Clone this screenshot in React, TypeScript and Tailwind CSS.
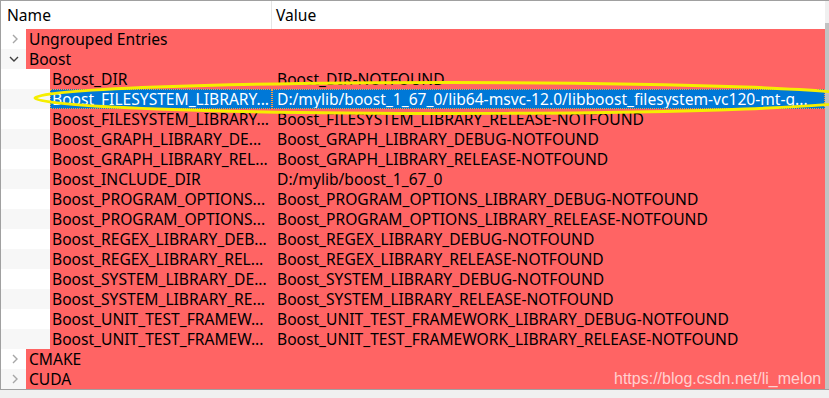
import React from 'react';

type Row = {
  name: string;
  value?: string;
  level: 0 | 1;
  expanded?: boolean;
  selected?: boolean;
};

const rows: Row[] = [
  { name: 'Ungrouped Entries', level: 0, expanded: false },
  { name: 'Boost', level: 0, expanded: true },
  { name: 'Boost_DIR', value: 'Boost_DIR-NOTFOUND', level: 1 },
  {
    name: 'Boost_FILESYSTEM_LIBRARY...',
    value: 'D:/mylib/boost_1_67_0/lib64-msvc-12.0/libboost_filesystem-vc120-mt-g...',
    level: 1,
    selected: true,
  },
  { name: 'Boost_FILESYSTEM_LIBRARY...', value: 'Boost_FILESYSTEM_LIBRARY_RELEASE-NOTFOUND', level: 1 },
  { name: 'Boost_GRAPH_LIBRARY_DE...', value: 'Boost_GRAPH_LIBRARY_DEBUG-NOTFOUND', level: 1 },
  { name: 'Boost_GRAPH_LIBRARY_REL...', value: 'Boost_GRAPH_LIBRARY_RELEASE-NOTFOUND', level: 1 },
  { name: 'Boost_INCLUDE_DIR', value: 'D:/mylib/boost_1_67_0', level: 1 },
  { name: 'Boost_PROGRAM_OPTIONS...', value: 'Boost_PROGRAM_OPTIONS_LIBRARY_DEBUG-NOTFOUND', level: 1 },
  { name: 'Boost_PROGRAM_OPTIONS...', value: 'Boost_PROGRAM_OPTIONS_LIBRARY_RELEASE-NOTFOUND', level: 1 },
  { name: 'Boost_REGEX_LIBRARY_DEB...', value: 'Boost_REGEX_LIBRARY_DEBUG-NOTFOUND', level: 1 },
  { name: 'Boost_REGEX_LIBRARY_REL...', value: 'Boost_REGEX_LIBRARY_RELEASE-NOTFOUND', level: 1 },
  { name: 'Boost_SYSTEM_LIBRARY_DE...', value: 'Boost_SYSTEM_LIBRARY_DEBUG-NOTFOUND', level: 1 },
  { name: 'Boost_SYSTEM_LIBRARY_RE...', value: 'Boost_SYSTEM_LIBRARY_RELEASE-NOTFOUND', level: 1 },
  { name: 'Boost_UNIT_TEST_FRAMEW...', value: 'Boost_UNIT_TEST_FRAMEWORK_LIBRARY_DEBUG-NOTFOUND', level: 1 },
  { name: 'Boost_UNIT_TEST_FRAMEW...', value: 'Boost_UNIT_TEST_FRAMEWORK_LIBRARY_RELEASE-NOTFOUND', level: 1 },
  { name: 'CMAKE', level: 0, expanded: false },
  { name: 'CUDA', level: 0, expanded: false },
];

function Chevron({ open }: { open?: boolean }) {
  // tree branch arrow
  return open ? (
    <svg width="10" height="10" viewBox="0 0 10 10" className="ml-[8px]">
      <polyline points="1,3 5,7 9,3" fill="none" stroke="#404040" strokeWidth="1.4" />
    </svg>
  ) : (
    <svg width="10" height="10" viewBox="0 0 10 10" className="ml-[9px]">
      <polyline points="3,1 7,5 3,9" fill="none" stroke="#a6a6a6" strokeWidth="1.4" />
    </svg>
  );
}

function TreeRow({ row, index }: { row: Row; index: number }) {
  const stripe = index % 2 === 1 ? 'bg-[#f7f7f7]' : 'bg-white';

  if (row.level === 0) {
    return (
      <div className="flex h-[20px]">
        <div className={`flex w-[25px] items-center ${stripe}`}>
          <Chevron open={row.expanded} />
        </div>
        <div className="flex-1 bg-[#ff6464] pl-[3px]">{row.name}</div>
      </div>
    );
  }

  if (row.selected) {
    return (
      <div className="flex h-[20px]">
        <div className={`w-[49px] ${stripe}`} />
        <div className="flex flex-1 bg-[#0078d7] text-white">
          <div className="w-[222px] overflow-hidden whitespace-nowrap border border-dotted border-[#ff9a3c] pl-[1px] leading-[18px]">
            {row.name}
          </div>
          <div className="flex-1 overflow-hidden whitespace-nowrap border border-dotted border-[#ff9a3c] pl-[4px] leading-[18px]">
            {row.value}
          </div>
        </div>
      </div>
    );
  }

  return (
    <div className="flex h-[20px]">
      <div className={`w-[49px] ${stripe}`} />
      <div className="flex flex-1 bg-[#ff6464]">
        <div className="w-[222px] overflow-hidden whitespace-nowrap pl-[2px]">{row.name}</div>
        <div className="flex-1 overflow-hidden whitespace-nowrap pl-[5px]">{row.value}</div>
      </div>
    </div>
  );
}

export default function App() {
  return (
    <div
      className="relative h-[398px] w-[829px] overflow-hidden bg-[#f0f0f0] text-[15.6px] leading-[20px] text-black"
      style={{ fontFamily: '"Noto Sans", "Open Sans", sans-serif' }}
    >
      <div className="flex border-l border-t border-b border-[#a0a0a0] bg-white">
        <div className="flex flex-1 flex-col">
          {/* header */}
          <div className="flex h-[28px] items-center">
            <div className="flex h-full w-[271px] items-center border-r border-[#e5e5e5] pl-[6px]">Name</div>
            <div className="flex h-full items-center pl-[4px]">Value</div>
          </div>
          {rows.map((row, i) => (
            <TreeRow key={i} row={row} index={i} />
          ))}
        </div>
        {/* scrollbar */}
        <div className="flex w-[4px] flex-col bg-[#f0f0f0]">
          <div className="mt-[22px] flex-1 bg-[#c2c2c2]" />
        </div>
      </div>

      {/* text line below, cut off */}
      <div className="h-[8px] overflow-hidden pl-[100px]">
        <div className="mt-[6px] whitespace-nowrap text-[16px] leading-none tracking-[6px]">
          all the build file of the library will be found at the path and then checked by cmake
        </div>
      </div>

      {/* watermark */}
      <div
        className="absolute left-[614px] top-[371px] text-[16px] leading-none text-[#ffd0d0]"
        style={{ fontFamily: '"Liberation Sans", Arial, sans-serif' }}
      >
        https://blog.csdn.net/li_melon
      </div>

      {/* hand-drawn annotation around selected row */}
      <svg className="pointer-events-none absolute left-0 top-0" width="829" height="398">
        <ellipse cx="451" cy="98" rx="416" ry="15.5" fill="none" stroke="#f5ee00" strokeWidth="3" />
      </svg>
    </div>
  );
}
